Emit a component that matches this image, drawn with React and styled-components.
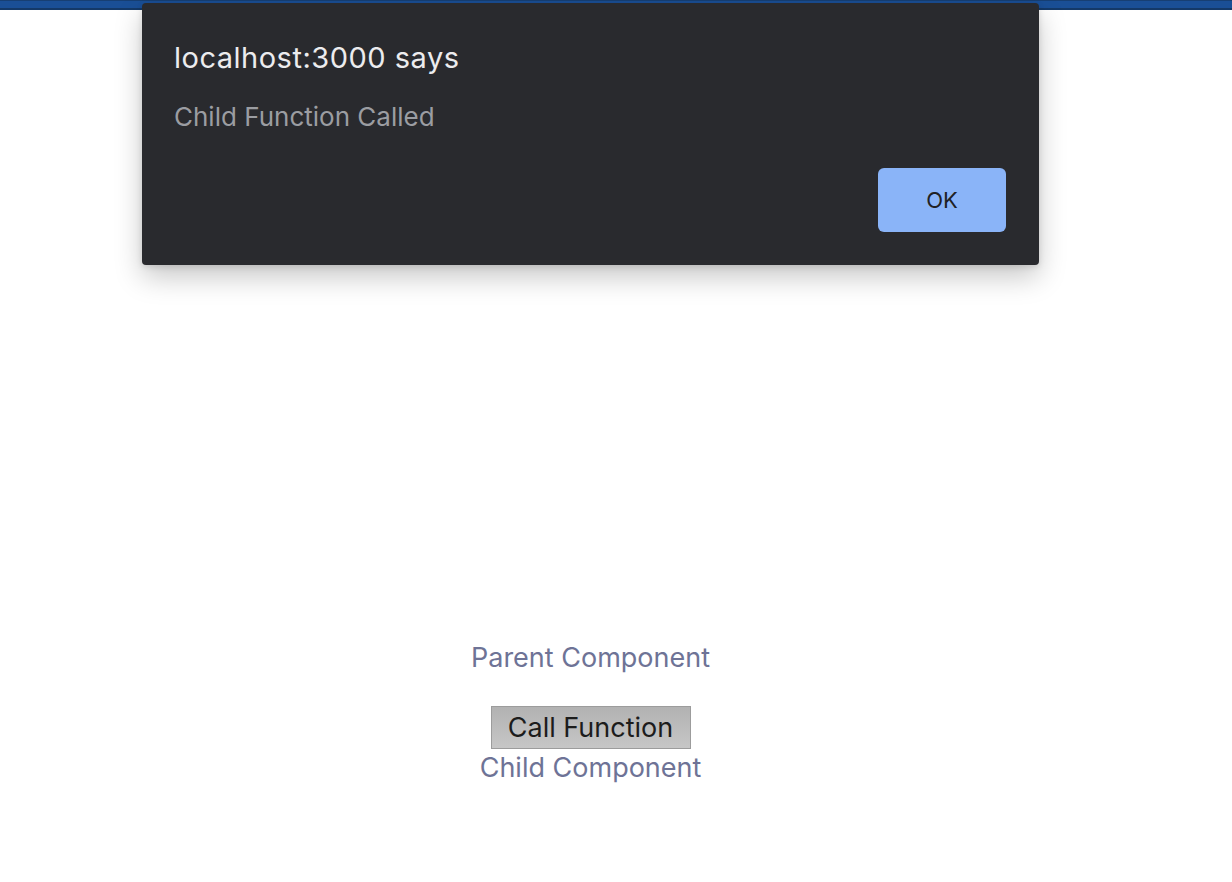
import styled, { createGlobalStyle } from 'styled-components'

const GlobalStyle = createGlobalStyle`
  html, body {
    margin: 0;
    background: #ffffff;
  }
`

function App() {
  return (
    <>
      <GlobalStyle />
      <TopBar />
      <Page>
        <Label>Parent Component</Label>
        <CallButton>Call Function</CallButton>
        <Label $tight>Child Component</Label>
      </Page>
      <Dialog>
        <DialogTitle>localhost:3000 says</DialogTitle>
        <DialogMessage>Child Function Called</DialogMessage>
        <DialogActions>
          <OkButton>OK</OkButton>
        </DialogActions>
      </Dialog>
    </>
  )
}

const TopBar = styled.div`
  height: 7px;
  background: #1a4f96;
  border-top: 1px solid #173f73;
  border-bottom: 2px solid #143968;
`

const Page = styled.div`
  width: 1181px;
  display: flex;
  flex-direction: column;
  align-items: center;
  padding-top: 632px;
  font-family: Inter, 'Liberation Sans', sans-serif;
`

const Label = styled.div`
  color: #6e7396;
  font-size: 27px;
  line-height: 32px;
  margin-top: ${p => (p.$tight ? '3px' : '0')};
`

const CallButton = styled.button`
  margin-top: 32px;
  width: 200px;
  height: 43px;
  padding: 0;
  font-family: Inter, 'Liberation Sans', sans-serif;
  font-size: 27px;
  color: #1c1c1c;
  background: linear-gradient(#b2b2b2, #c6c6c6);
  border: 1px solid #9c9c9c;
  border-radius: 0;
`

const Dialog = styled.div`
  position: absolute;
  top: 3px;
  left: 142px;
  width: 897px;
  height: 262px;
  box-sizing: border-box;
  padding: 37px 33px 0 32px;
  background: #292a2e;
  border-radius: 4px;
  box-shadow: 0 12px 28px rgba(0, 0, 0, 0.22), 0 2px 6px rgba(0, 0, 0, 0.12);
  font-family: Inter, 'Liberation Sans', sans-serif;
  display: flex;
  flex-direction: column;
`

const DialogTitle = styled.div`
  color: #ececee;
  font-size: 29px;
  letter-spacing: 0.5px;
  line-height: 36px;
`

const DialogMessage = styled.div`
  margin-top: 25px;
  color: #9b9da2;
  font-size: 26px;
  line-height: 32px;
`

const DialogActions = styled.div`
  display: flex;
  justify-content: flex-end;
  margin-top: 35px;
`

const OkButton = styled.button`
  width: 128px;
  height: 64px;
  background: #8ab4f8;
  border: none;
  border-radius: 6px;
  font-family: Inter, 'Liberation Sans', sans-serif;
  font-size: 22px;
  color: #202124;
`

export default App
